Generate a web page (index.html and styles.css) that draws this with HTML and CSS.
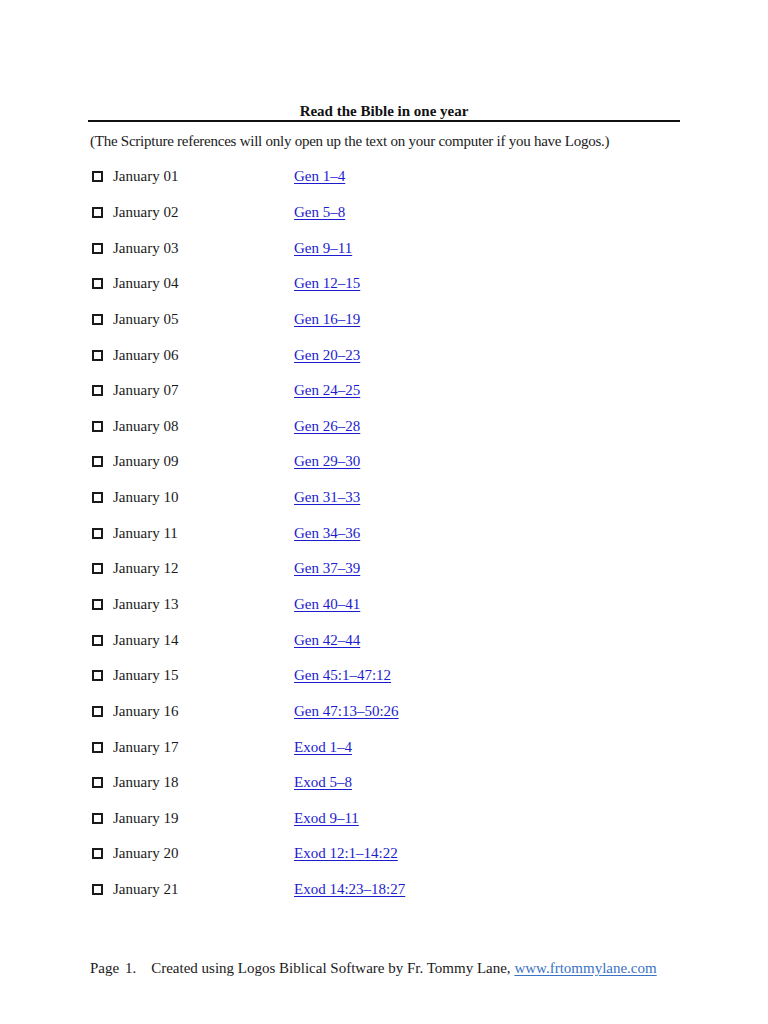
FILE: index.html
```html
<!DOCTYPE html>
<html>
<head>
<meta charset="utf-8">
<link rel="stylesheet" href="styles.css">
</head>
<body>
<div class="page">
  <h1 class="title">Read the Bible in one year</h1>
  <p class="note">(The Scripture references will only open up the text on your computer if you have Logos.)</p>
  <ul class="plan">
    <li class="row"><span class="box"></span><span class="date">January 01</span><a class="ref" href="#">Gen 1–4</a></li>
    <li class="row"><span class="box"></span><span class="date">January 02</span><a class="ref" href="#">Gen 5–8</a></li>
    <li class="row"><span class="box"></span><span class="date">January 03</span><a class="ref" href="#">Gen 9–11</a></li>
    <li class="row"><span class="box"></span><span class="date">January 04</span><a class="ref" href="#">Gen 12–15</a></li>
    <li class="row"><span class="box"></span><span class="date">January 05</span><a class="ref" href="#">Gen 16–19</a></li>
    <li class="row"><span class="box"></span><span class="date">January 06</span><a class="ref" href="#">Gen 20–23</a></li>
    <li class="row"><span class="box"></span><span class="date">January 07</span><a class="ref" href="#">Gen 24–25</a></li>
    <li class="row"><span class="box"></span><span class="date">January 08</span><a class="ref" href="#">Gen 26–28</a></li>
    <li class="row"><span class="box"></span><span class="date">January 09</span><a class="ref" href="#">Gen 29–30</a></li>
    <li class="row"><span class="box"></span><span class="date">January 10</span><a class="ref" href="#">Gen 31–33</a></li>
    <li class="row"><span class="box"></span><span class="date">January 11</span><a class="ref" href="#">Gen 34–36</a></li>
    <li class="row"><span class="box"></span><span class="date">January 12</span><a class="ref" href="#">Gen 37–39</a></li>
    <li class="row"><span class="box"></span><span class="date">January 13</span><a class="ref" href="#">Gen 40–41</a></li>
    <li class="row"><span class="box"></span><span class="date">January 14</span><a class="ref" href="#">Gen 42–44</a></li>
    <li class="row"><span class="box"></span><span class="date">January 15</span><a class="ref" href="#">Gen 45:1–47:12</a></li>
    <li class="row"><span class="box"></span><span class="date">January 16</span><a class="ref" href="#">Gen 47:13–50:26</a></li>
    <li class="row"><span class="box"></span><span class="date">January 17</span><a class="ref" href="#">Exod 1–4</a></li>
    <li class="row"><span class="box"></span><span class="date">January 18</span><a class="ref" href="#">Exod 5–8</a></li>
    <li class="row"><span class="box"></span><span class="date">January 19</span><a class="ref" href="#">Exod 9–11</a></li>
    <li class="row"><span class="box"></span><span class="date">January 20</span><a class="ref" href="#">Exod 12:1–14:22</a></li>
    <li class="row"><span class="box"></span><span class="date">January 21</span><a class="ref" href="#">Exod 14:23–18:27</a></li>
  </ul>
  <p class="footer"><span class="pageno">Page 1.</span>Created using Logos Biblical Software by Fr. Tommy Lane, <a class="site" href="#">www.frtommylane.com</a></p>
</div>
</body>
</html>
```

FILE: styles.css
```css
html, body {
  margin: 0;
  padding: 0;
  background: #ffffff;
}

body {
  font-family: "Liberation Serif", "Times New Roman", serif;
  font-size: 15px;
  color: #1a1a1a;
}

.page {
  width: 592px;
  margin-left: 88px;
  padding-top: 102px;
}

.title {
  margin: 0;
  font-size: 15px;
  font-weight: bold;
  line-height: 18px;
  text-align: center;
  color: #111;
  border-bottom: 2px solid #111;
}

.note {
  margin: 10px 0 0 2px;
  line-height: 18px;
  letter-spacing: -0.25px;
}

.plan {
  list-style: none;
  margin: 9px 0 0 0;
  padding: 0;
}

.row {
  display: flex;
  align-items: center;
  height: 35.65px;
}

.box {
  box-sizing: border-box;
  width: 11px;
  height: 11px;
  border: 2px solid #1a1a1a;
  margin-left: 4px;
  margin-right: 10px;
  flex: none;
}

.date {
  width: 181px;
  flex: none;
}

.ref {
  color: #1c1ccf;
  text-decoration: underline;
  text-underline-offset: 2px;
}

.footer {
  margin: 52px 0 0 2px;
  line-height: 18px;
}

.pageno {
  margin-right: 15px;
  word-spacing: 2px;
}

.site {
  color: #3a72c4;
  text-decoration: underline;
  text-underline-offset: 2px;
}
```
